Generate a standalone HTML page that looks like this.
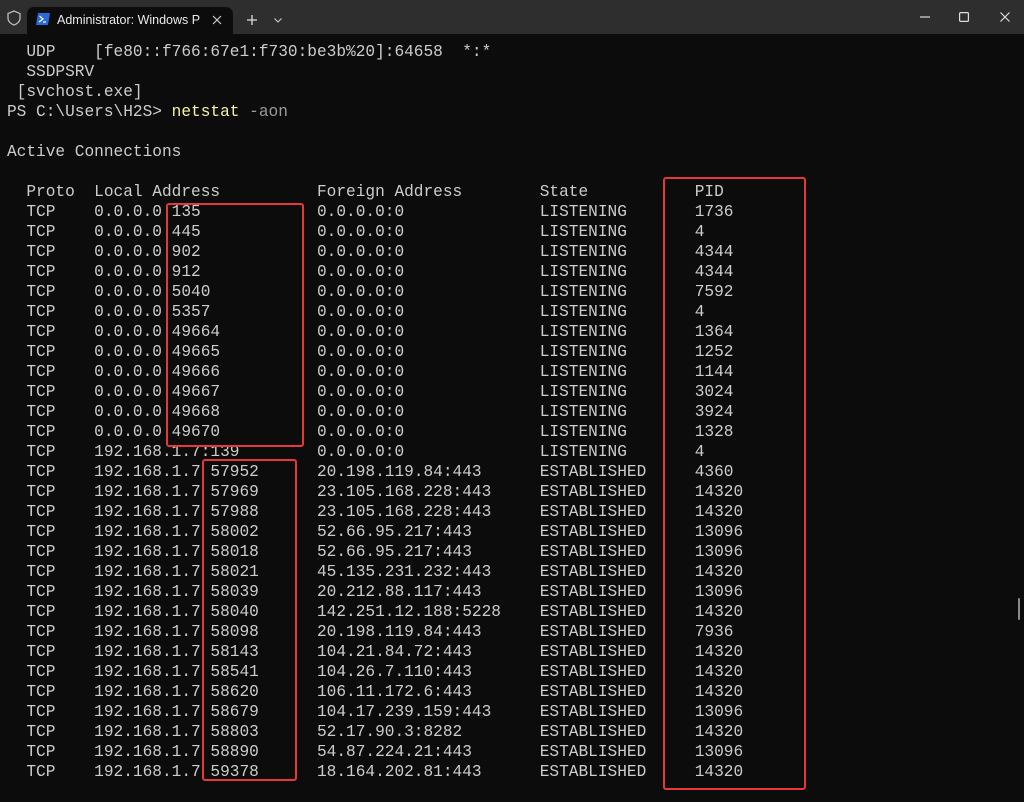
<!DOCTYPE html>
<html><head><meta charset="utf-8"><style>
html,body{margin:0;padding:0;}
body{width:1024px;height:802px;background:#0c0c0c;position:relative;overflow:hidden;font-family:"Liberation Sans",sans-serif;}
.title{position:absolute;left:0;top:0;width:1024px;height:34px;background:#2e2e2e;}
.tab{position:absolute;left:27px;top:7px;width:206px;height:27px;background:#0c0c0c;border-radius:7px 7px 0 0;}
.tabtxt{position:absolute;left:57px;top:13px;font-size:12.5px;color:#eaeaea;white-space:nowrap;width:143px;overflow:hidden;}
pre{position:absolute;left:7px;top:42px;margin:0;font-family:"Liberation Mono",monospace;font-size:16.15px;line-height:20px;color:#cccccc;}
.y{color:#f9f1a5}.g{color:#9a9a9a}
.box{position:absolute;border:2px solid #e8373a;border-radius:3px;box-sizing:border-box;}
</style></head><body>
<div class="title">
<svg style="position:absolute;left:7px;top:10px" width="14" height="16" viewBox="0 0 14 16"><path d="M7 1 L13 3.5 V8 C13 11.5 10 14 7 15 C4 14 1 11.5 1 8 V3.5 Z" fill="none" stroke="#bbb" stroke-width="1.3"/></svg>
<div class="tab"></div>
<svg style="position:absolute;left:36px;top:13px" width="14" height="12" viewBox="0 0 14 12"><path d="M2 0 H14 L12 12 H0 Z" fill="#2a6ad8"/><path d="M3.5 3 L7 6 L3 9 M7 9 H10" stroke="#fff" stroke-width="1.2" fill="none"/></svg>
<div class="tabtxt">Administrator: Windows PowerShell</div>
<svg style="position:absolute;left:212px;top:15px" width="10" height="10"><path d="M1 1 L9 9 M9 1 L1 9" stroke="#ccc" stroke-width="1.2"/></svg>
<svg style="position:absolute;left:247px;top:15px" width="10" height="10"><path d="M5 0 V10 M0 5 H10" stroke="#ddd" stroke-width="1.3"/></svg>
<svg style="position:absolute;left:274px;top:18px" width="8" height="5"><path d="M0.5 0.5 L4 4 L7.5 0.5" stroke="#ccc" stroke-width="1.1" fill="none"/></svg>
<svg style="position:absolute;left:920px;top:16px" width="10" height="2"><path d="M0 1 H10" stroke="#ddd" stroke-width="1.2"/></svg>
<svg style="position:absolute;left:959px;top:12px" width="10" height="10"><rect x="0.6" y="0.6" width="8.8" height="8.8" rx="1" fill="none" stroke="#ddd" stroke-width="1.2"/></svg>
<svg style="position:absolute;left:1000px;top:12px" width="10" height="10"><path d="M0.5 0.5 L9.5 9.5 M9.5 0.5 L0.5 9.5" stroke="#ddd" stroke-width="1.2"/></svg>
</div>
<pre>  UDP    [fe80::f766:67e1:f730:be3b%20]:64658  *:*
  SSDPSRV
 [svchost.exe]
PS C:\Users\H2S&gt; <span class="y">netstat</span> <span class="g">-aon</span>

Active Connections

  Proto  Local Address          Foreign Address        State           PID
  TCP    0.0.0.0 135            0.0.0.0:0              LISTENING       1736
  TCP    0.0.0.0 445            0.0.0.0:0              LISTENING       4
  TCP    0.0.0.0 902            0.0.0.0:0              LISTENING       4344
  TCP    0.0.0.0 912            0.0.0.0:0              LISTENING       4344
  TCP    0.0.0.0 5040           0.0.0.0:0              LISTENING       7592
  TCP    0.0.0.0 5357           0.0.0.0:0              LISTENING       4
  TCP    0.0.0.0 49664          0.0.0.0:0              LISTENING       1364
  TCP    0.0.0.0 49665          0.0.0.0:0              LISTENING       1252
  TCP    0.0.0.0 49666          0.0.0.0:0              LISTENING       1144
  TCP    0.0.0.0 49667          0.0.0.0:0              LISTENING       3024
  TCP    0.0.0.0 49668          0.0.0.0:0              LISTENING       3924
  TCP    0.0.0.0 49670          0.0.0.0:0              LISTENING       1328
  TCP    192.168.1.7:139        0.0.0.0:0              LISTENING       4
  TCP    192.168.1.7 57952      20.198.119.84:443      ESTABLISHED     4360
  TCP    192.168.1.7 57969      23.105.168.228:443     ESTABLISHED     14320
  TCP    192.168.1.7 57988      23.105.168.228:443     ESTABLISHED     14320
  TCP    192.168.1.7 58002      52.66.95.217:443       ESTABLISHED     13096
  TCP    192.168.1.7 58018      52.66.95.217:443       ESTABLISHED     13096
  TCP    192.168.1.7 58021      45.135.231.232:443     ESTABLISHED     14320
  TCP    192.168.1.7 58039      20.212.88.117:443      ESTABLISHED     13096
  TCP    192.168.1.7 58040      142.251.12.188:5228    ESTABLISHED     14320
  TCP    192.168.1.7 58098      20.198.119.84:443      ESTABLISHED     7936
  TCP    192.168.1.7 58143      104.21.84.72:443       ESTABLISHED     14320
  TCP    192.168.1.7 58541      104.26.7.110:443       ESTABLISHED     14320
  TCP    192.168.1.7 58620      106.11.172.6:443       ESTABLISHED     14320
  TCP    192.168.1.7 58679      104.17.239.159:443     ESTABLISHED     13096
  TCP    192.168.1.7 58803      52.17.90.3:8282        ESTABLISHED     14320
  TCP    192.168.1.7 58890      54.87.224.21:443       ESTABLISHED     13096
  TCP    192.168.1.7 59378      18.164.202.81:443      ESTABLISHED     14320</pre>
<div class="box" style="left:166px;top:203px;width:138px;height:244px"></div>
<div class="box" style="left:202px;top:459px;width:95px;height:322px"></div>
<div class="box" style="left:663px;top:177px;width:143px;height:613px"></div>
<div style="position:absolute;left:1018px;top:598px;width:2px;height:22px;background:#8a8a8a;border-radius:1px"></div>
</body></html>
